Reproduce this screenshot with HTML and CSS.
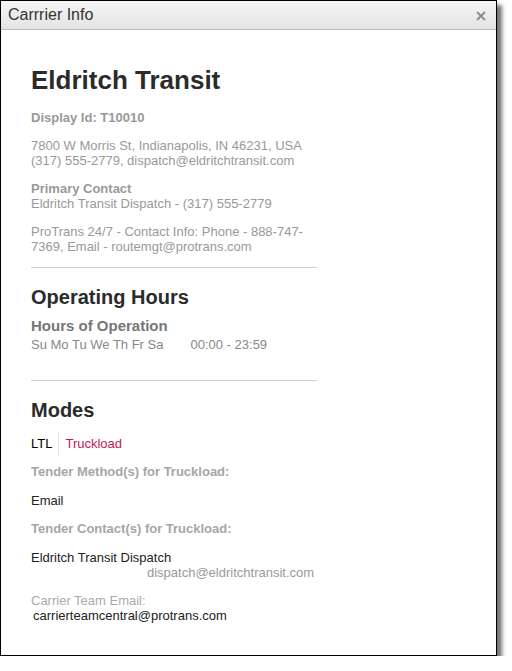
FILE: index.html
```html
<!DOCTYPE html>
<html>
<head>
    <title>Carrier Info</title>
    <meta charset="UTF-8">
    <link rel="stylesheet" href="styles.css">
</head>
<body>
    <div class="dialog">
        <div class="dialog-header">
            <span class="dialog-title">Carrrier Info</span>
            <span class="close-button">
                <svg width="10" height="10" viewBox="0 0 10 10"><path d="M1 1L9 9M9 1L1 9" stroke="#8a8a8a" stroke-width="1.8"/></svg>
            </span>
        </div>
        <div class="dialog-content">
            <h1 class="carrier-name">Eldritch Transit</h1>
            <p class="info bold-info">Display Id: T10010</p>
            <p class="info">7800 W Morris St, Indianapolis, IN 46231, USA<br />(317) 555-2779, dispatch@eldritchtransit.com</p>
            <p class="info"><b>Primary Contact</b><br />Eldritch Transit Dispatch - (317) 555-2779</p>
            <p class="info">ProTrans 24/7 - Contact Info: Phone - 888-747-7369, Email - routemgt@protrans.com</p>
            <hr class="divider" />

            <h2 class="section-title">Operating Hours</h2>
            <div class="hours-title">Hours of Operation</div>
            <div class="hours-row"><span class="days">Su Mo Tu We Th Fr Sa</span><span>00:00 - 23:59</span></div>
            <hr class="divider hours-divider" />

            <h2 class="section-title modes-title">Modes</h2>
            <div class="mode-tabs">
                <div class="mode-tab">LTL</div>
                <div class="mode-tab active-tab">Truckload</div>
            </div>
            <p class="label">Tender Method(s) for Truckload:</p>
            <p class="value">Email</p>
            <p class="label">Tender Contact(s) for Truckload:</p>
            <p class="value">Eldritch Transit Dispatch<br /><span class="contact-email">dispatch@eldritchtransit.com</span></p>
            <p class="team-label">Carrier Team Email:</p>
            <div class="team-email">carrierteamcentral@protrans.com</div>
        </div>
    </div>
</body>
</html>
```

FILE: styles.css
```css
html {
    font-family: "Liberation Sans", Arial, sans-serif;
}

body {
    margin: 0;
    background-color: white;
}

.dialog {
    width: 495px;
    height: 654px;
    border: 1px solid black;
    background-color: white;
    box-shadow: 5px 5px 4px rgba(0, 0, 0, 0.55);
}

.dialog-header {
    height: 28px;
    border-bottom: 1px solid #bdbdbd;
    background: linear-gradient(#f6f6f6, #e3e3e3);
    display: flex;
    flex-direction: row;
    align-items: center;
    justify-content: space-between;
    padding: 0 10px 0 7px;
}

.dialog-title {
    font-size: 16px;
    color: #333;
}

.close-button {
    display: flex;
    padding-top: 2px;
}

.dialog-content {
    width: 286px;
    padding: 35px 0 0 30px;
    font-size: 13px;
    line-height: 15px;
    color: #999;
}

.carrier-name {
    font-size: 26px;
    line-height: 30px;
    margin: 0 0 15px 0;
    color: #2b2b2b;
}

.info {
    margin: 0 0 13px 0;
}

.bold-info {
    font-weight: bold;
}

.divider {
    border: none;
    border-top: 1px solid #ccc;
    margin: 0;
    margin-top: 13px;
}

.section-title {
    font-size: 20px;
    line-height: 24px;
    margin: 17px 0 0 0;
    color: #2b2b2b;
}

.hours-title {
    font-size: 15px;
    line-height: 17px;
    font-weight: bold;
    color: #777;
    margin-top: 8px;
}

.hours-row {
    color: #888;
    margin-top: 3px;
}

.days {
    padding-right: 27px;
}

.hours-divider {
    margin-top: 28px;
}

.modes-title {
    margin-top: 17px;
}

.mode-tabs {
    display: flex;
    flex-direction: row;
    margin-top: 9px;
}

.mode-tab {
    line-height: 25px;
    color: black;
    padding-right: 6px;
}

.active-tab {
    color: #c2185b;
    border-left: 1px solid #e3e3e3;
    padding-left: 6px;
}

.label {
    font-weight: bold;
    color: #a6a6a6;
    margin: 8px 0 0 0;
}

.value {
    color: #222;
    margin: 14px 0 13px 0;
}

.label + .value + .label {
    margin-top: 0;
}

.contact-email {
    color: #999;
    padding-left: 116px;
}

.team-label {
    color: #aaa;
    margin: 0;
}

.team-email {
    color: #222;
    padding-left: 2px;
}
```
